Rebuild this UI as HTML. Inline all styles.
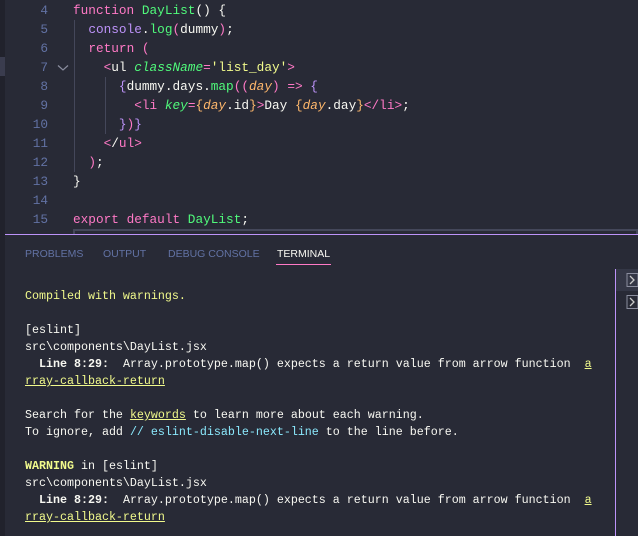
<!DOCTYPE html>
<html><head><meta charset="utf-8"><style>
*{margin:0;padding:0;box-sizing:border-box}
body{width:638px;height:536px;overflow:hidden;background:#282a36;position:relative;font-family:"Liberation Mono",monospace}
.strip{position:absolute;left:0;top:0;width:5px;height:536px;background:#21222c}
.cur{position:absolute;left:0;top:57px;width:5px;height:19px;background:#3a3c4e}
.ln{position:absolute;left:0;width:48px;text-align:right;color:#6272a4;font-size:12.75px;line-height:19px}
.code{position:absolute;left:73px;font-size:12.75px;line-height:19px;color:#f8f8f2;white-space:pre}
.k{color:#ff79c6}.f{color:#50fa7b}.p{color:#ffb86c;font-style:italic}.a{color:#50fa7b;font-style:italic}
.s{color:#f1fa8c}.b1{color:#f1fa8c}.b2{color:#ff79c6}.b3{color:#bd93f9}.o{color:#ffb86c}
.guide{position:absolute;width:1px;background:#44475a}
.t{position:absolute;left:25px;font-size:11.67px;line-height:17px;color:#f8f8f2;white-space:pre}
.y{color:#f1fa8c}.u{color:#f1fa8c;text-decoration:underline}.c{color:#8be9fd}
.tab{position:absolute;top:247px;font-family:"Liberation Sans",sans-serif;font-size:10.5px;color:#6272a4;line-height:14px}
</style></head><body>
<div class="strip"></div><div class="cur"></div>
<div class="guide" style="left:74px;top:20px;height:152px"></div>
<div class="guide" style="left:105px;top:77px;height:57px"></div>
<div style="position:absolute;top:1px;left:0">
<div class="ln" style="top:0">4</div>
<div class="ln" style="top:19px">5</div>
<div class="ln" style="top:38px">6</div>
<div class="ln" style="top:57px">7</div>
<div class="ln" style="top:76px">8</div>
<div class="ln" style="top:95px">9</div>
<div class="ln" style="top:114px">10</div>
<div class="ln" style="top:133px">11</div>
<div class="ln" style="top:152px">12</div>
<div class="ln" style="top:171px">13</div>
<div class="ln" style="top:190px">14</div>
<div class="ln" style="top:209px">15</div>
</div>
<svg style="position:absolute;left:57px;top:64px" width="12" height="8"><path d="M1 1.5 L6 6 L11 1.5" stroke="#8a8d9e" stroke-width="1.2" fill="none"/></svg>
<div class="code" style="top:1px"><span class="k">function</span> <span class="f">DayList</span>() {
  <span class="b3">console</span>.<span class="f">log</span><span class="b2">(</span>dummy<span class="b2">)</span>;
  <span class="k">return</span> <span class="b2">(</span>
    <span class="k">&lt;</span>ul <span class="a">className</span><span class="k">=</span><span class="s">'list_day'</span><span class="k">&gt;</span>
      <span class="b3">{</span>dummy.days.<span class="f">map</span><span class="b2">((</span><span class="p">day</span><span class="b2">)</span> <span class="k">=&gt;</span> <span class="b3">{</span>
        <span class="k">&lt;</span><span class="k">li</span> <span class="a">key</span><span class="k">=</span><span class="o">{</span><span class="p">day</span>.id<span class="o">}</span><span class="k">&gt;</span>Day <span class="o">{</span><span class="p">day</span>.day<span class="o">}</span><span class="k">&lt;/li&gt;</span>;
      <span class="b3">}</span><span class="b2">)</span><span class="b3">}</span>
    <span class="k">&lt;</span>/<span class="k">ul&gt;</span>
  <span class="b2">)</span>;
}

<span class="k">export</span> <span class="k">default</span> <span class="f">DayList</span>;</div>
<div style="position:absolute;left:73px;top:229px;width:565px;height:5px;border:2px solid #44475a;border-bottom:none"></div>
<div style="position:absolute;left:5px;top:234px;width:633px;height:1px;background:#bd93f9"></div>
<div style="position:absolute;left:5px;top:235px;width:633px;height:301px;background:#282a36"></div>
<div class="tab" style="left:25px">PROBLEMS</div>
<div class="tab" style="left:103px">OUTPUT</div>
<div class="tab" style="left:168px">DEBUG CONSOLE</div>
<div class="tab" style="left:277px;color:#f8f8f2">TERMINAL</div>
<div style="position:absolute;left:276px;top:264px;width:55px;height:1px;background:#ff79c6"></div>
<div style="position:absolute;left:615px;top:269px;width:1px;height:267px;background:#bd93f9"></div>
<div style="position:absolute;left:616px;top:269px;width:22px;height:22px;background:#343746"></div>
<svg style="position:absolute;left:626px;top:273px" width="12" height="40"><rect x="1" y="0.5" width="11" height="13" fill="none" stroke="#8a8d9e"/><path d="M4 3 L8 7 L4 11" stroke="#c8c8c8" stroke-width="1.3" fill="none"/><rect x="1" y="22.5" width="11" height="13" fill="none" stroke="#8a8d9e"/><path d="M4 25 L8 29 L4 33" stroke="#c8c8c8" stroke-width="1.3" fill="none"/></svg>
<div class="t" style="top:288px"><span class="y">Compiled with warnings.</span>

[eslint]
src\components\DayList.jsx
  <b>Line 8:29:</b>  Array.prototype.map() expects a return value from arrow function  <span class="u">a</span>
<span class="u">rray-callback-return</span>

Search for the <span class="u">keywords</span> to learn more about each warning.
To ignore, add <span class="c">// eslint-disable-next-line</span> to the line before.

<b class="y">WARNING</b> in [eslint]
src\components\DayList.jsx
  <b>Line 8:29:</b>  Array.prototype.map() expects a return value from arrow function  <span class="u">a</span>
<span class="u">rray-callback-return</span></div>
</body></html>
